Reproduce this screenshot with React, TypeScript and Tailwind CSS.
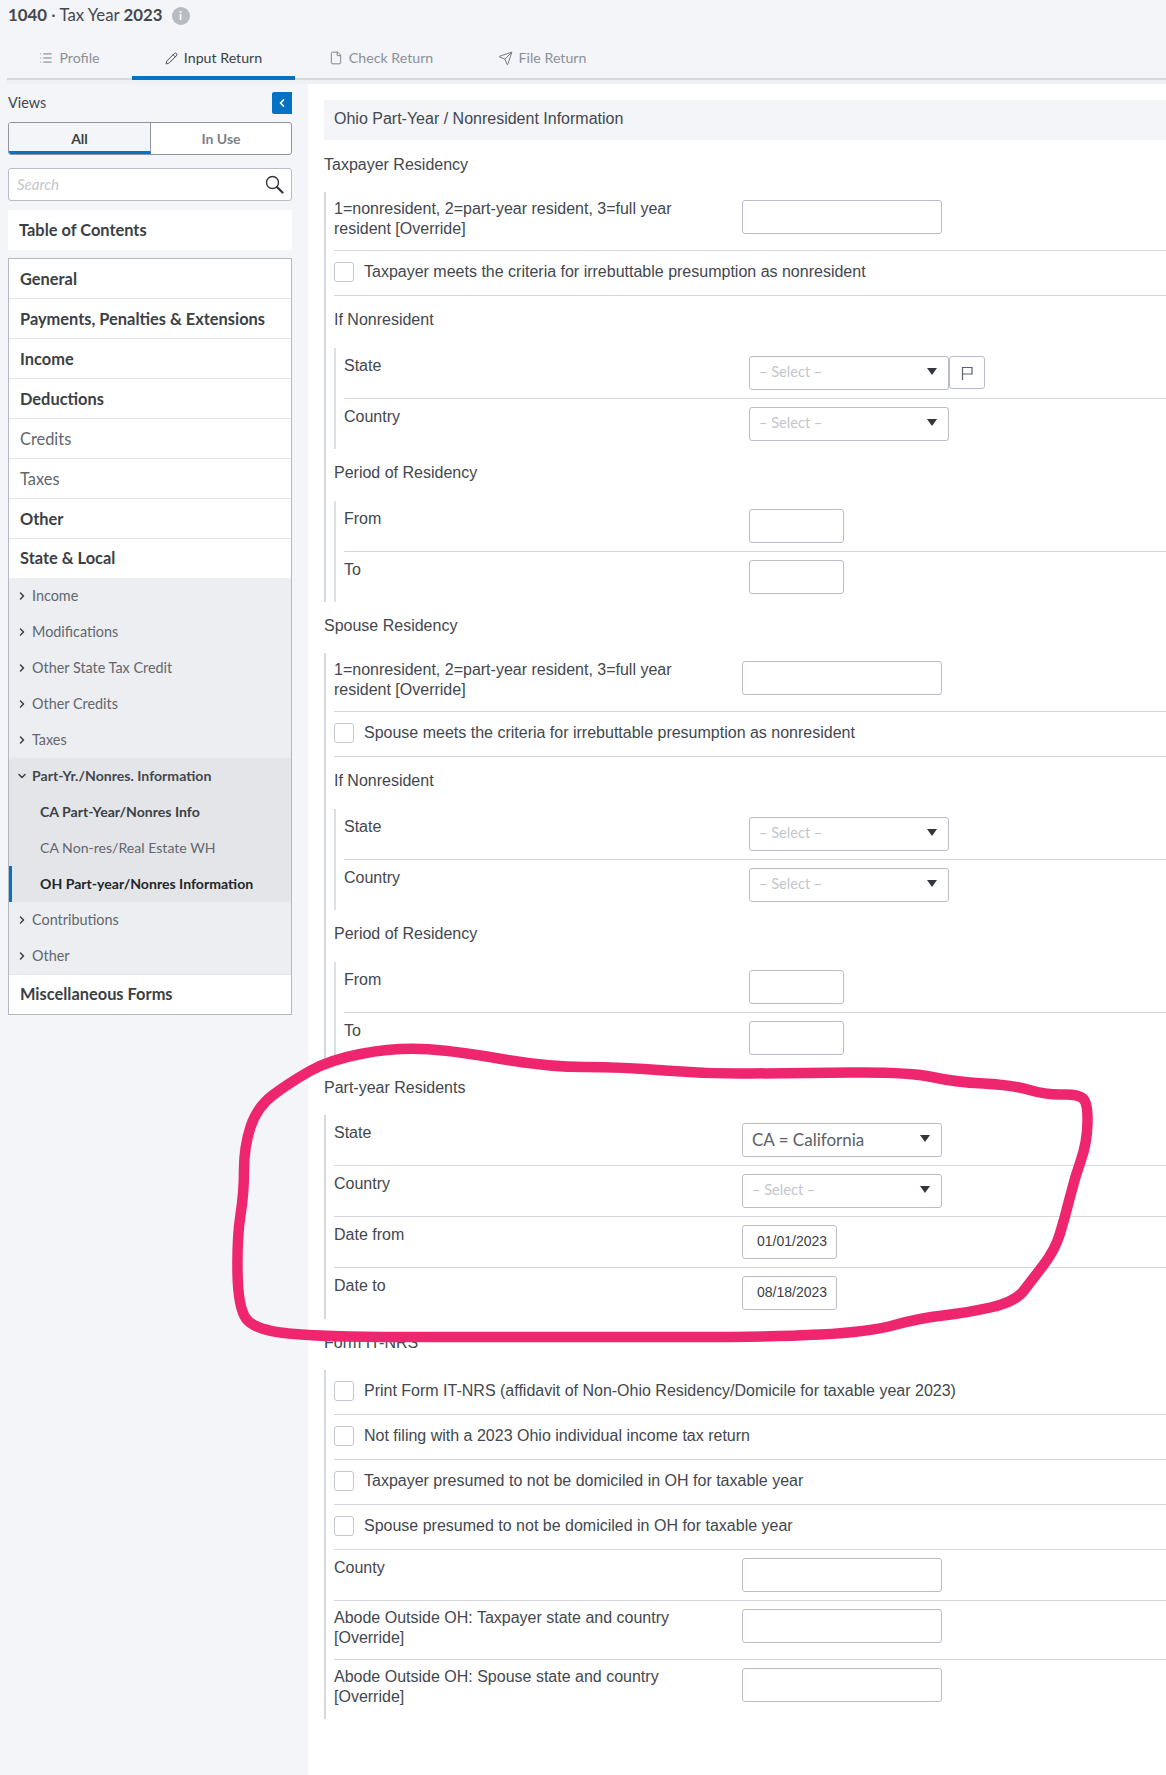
import React from "react";
import { ChevronRight, ChevronDown, ChevronLeft, List, Pencil, File, Send } from "lucide-react";

const LATO = "font-['Lato',sans-serif]";

function Input({ value, date }: { value?: string; date?: boolean }) {
  return (
    <input
      readOnly
      defaultValue={value}
      className={
        (date ? "w-[95px]" : "w-[200px]") +
        " h-[34px] rounded-[3px] border border-[#b9bdc7] bg-white pb-[2px] pl-[14px] text-[14px] text-[#3c4046] outline-none"
      }
    />
  );
}

function Select({ value }: { value?: string }) {
  return (
    <div className={"flex h-[34px] w-[200px] items-center justify-between rounded-[3px] border border-[#b9bdc7] bg-white pl-[9px] pr-[11px] " + LATO}>
      {value ? (
        <span className="pb-[1px] text-[17px] text-[#5b6068]">{value}</span>
      ) : (
        <span className="pb-[2px] text-[14.6px] text-[#c3c6cd]">– Select –</span>
      )}
      <svg width="10" height="8" viewBox="0 0 10 8" className="mb-[2px]">
        <polygon points="0,0 10,0 5,7" fill="#33363b" />
      </svg>
    </div>
  );
}

function FlagBtn() {
  return (
    <div className="flex h-[33px] w-[36px] items-center justify-center rounded-[3px] border border-[#b9bdc7] bg-white">
      <svg width="12" height="14" viewBox="0 0 12 14" fill="none" stroke="#5c6068" strokeWidth="1.2">
        <path d="M1.5 14V1.5H11V8H1.5" />
      </svg>
    </div>
  );
}

function TopRow({ label, children, last, tall }: { label: React.ReactNode; children: React.ReactNode; last?: boolean; tall?: boolean }) {
  return (
    <div className={(last ? "" : "border-b border-[#d5d8de] ") + (tall ? "h-[59px] " : "h-[51px] ") + "flex"}>
      <div className={(tall ? "pt-[7px] " : "pt-[8px] ") + "w-[408px] shrink-0 pr-[40px] leading-[20px]"}>{label}</div>
      <div className="pt-[8px]">{children}</div>
    </div>
  );
}

function NestRow({ label, children, last }: { label: string; children: React.ReactNode; last?: boolean }) {
  return (
    <div className={(last ? "h-[50px] " : "h-[51px] border-b border-[#d5d8de] ") + "flex"}>
      <div className="w-[405px] shrink-0 pt-[8px] leading-[20px]">{label}</div>
      <div className="flex items-start pt-[8px]">{children}</div>
    </div>
  );
}

function CheckRow({ label }: { label: string }) {
  return (
    <div className="flex h-[45px] items-center gap-[10px] border-b border-[#d5d8de] pb-[2px]">
      <div className="h-[20px] w-[20px] rounded-[3px] border border-[#c4c7cf] bg-white" />
      <span className="leading-[20px]">{label}</span>
    </div>
  );
}

function Heading({ children }: { children: string }) {
  return <div className="h-[52px] pt-[15px] leading-[20px]">{children}</div>;
}

function SubHeading({ children }: { children: string }) {
  return <div className="h-[52px] pt-[14px] leading-[20px]">{children}</div>;
}

function Nested({ children }: { children: React.ReactNode }) {
  return <div className="border-l-2 border-[#dcdfe5] pl-2">{children}</div>;
}

function Residency({ who, flag }: { who: string; flag?: boolean }) {
  return (
    <div className="border-l-[2px] border-[#d5d8de] pl-2">
      <TopRow tall label="1=nonresident, 2=part-year resident, 3=full year resident [Override]">
        <Input />
      </TopRow>
      <CheckRow label={`${who} meets the criteria for irrebuttable presumption as nonresident`} />
      <SubHeading>If Nonresident</SubHeading>
      <Nested>
        <NestRow label="State">
          <Select />
          {flag ? <FlagBtn /> : null}
        </NestRow>
        <NestRow label="Country" last>
          <Select />
        </NestRow>
      </Nested>
      <SubHeading>Period of Residency</SubHeading>
      <Nested>
        <NestRow label="From">
          <Input date />
        </NestRow>
        <NestRow label="To" last>
          <Input date />
        </NestRow>
      </Nested>
    </div>
  );
}

function Main({ label, muted }: { label: string; muted?: boolean }) {
  return (
    <div
      className={
        "flex h-[40px] items-center border-b border-[#e2e4e9] bg-white pl-[11px] pt-[1px] text-[16.4px] " +
        (muted ? "font-normal text-[#62676f]" : "font-bold text-[#3b3f46]")
      }
    >
      {label}
    </div>
  );
}

function Sub({ label }: { label: string }) {
  return (
    <div className="flex h-[36px] items-center pb-[1px] text-[14.4px] text-[#62676f]">
      <ChevronRight size={12} strokeWidth={3} className="ml-[7px] mr-[4px] text-[#3b3f46]" />
      {label}
    </div>
  );
}

function Tab({ icon, label, active, className }: { icon: React.ReactNode; label: string; active?: boolean; className: string }) {
  return (
    <div
      className={
        "flex h-[35px] items-center justify-center gap-[6px] border-b-4 pb-[5px] text-[14.2px] " +
        (active ? "border-[#0672c4] text-[#3b3f46]" : "border-transparent text-[#8b9097]") +
        " " +
        className
      }
    >
      <span className={active ? "text-[#3b3f46]" : "text-[#70757c]"}>{icon}</span>
      {label}
    </div>
  );
}

const pts: [number, number][] = [
  [329, 1060], [392, 1048], [450, 1050], [547, 1067], [622, 1067], [708, 1074], [794, 1073], [909, 1072],
  [955, 1082], [1012, 1085], [1047, 1095], [1078, 1094], [1088, 1103], [1087, 1143], [1075, 1177], [1065, 1217],
  [1055, 1250], [1032, 1280], [1015, 1302], [966, 1313], [920, 1318], [869, 1332], [771, 1337], [622, 1337],
  [478, 1337], [323, 1337], [254, 1330], [238, 1307], [237, 1237], [244, 1193], [244, 1147], [257, 1107], [289, 1083],
];

function smooth(p: [number, number][]) {
  const n = p.length;
  const mid = (a: [number, number], b: [number, number]) => `${(a[0] + b[0]) / 2} ${(a[1] + b[1]) / 2}`;
  let d = `M${mid(p[n - 1], p[0])}`;
  for (let i = 0; i < n; i++) d += ` Q${p[i][0]} ${p[i][1]} ${mid(p[i], p[(i + 1) % n])}`;
  return d + "Z";
}

export default function App() {
  return (
    <div className="relative min-h-[1775px] w-[1166px] overflow-hidden bg-[#f3f5f9] font-['Liberation_Sans',Arial,sans-serif] text-[16px] text-[#43474e]">
      <div className={"flex h-[45px] items-start gap-[9px] pl-[8px] pt-[4px] text-[16.8px] leading-[22px] " + LATO}>
        <span className="text-[#43474e]">
          <b className="font-bold">1040</b> · Tax Year <b className="font-bold">2023</b>
        </span>
        <span className="mt-[3px] flex h-[18px] w-[18px] items-center justify-center rounded-full bg-[#b7bbc2] text-[12px] font-bold text-white">i</span>
      </div>

      <div className={"ml-[7px] flex h-[35px] border-b-2 border-[#d6d8de] " + LATO}>
        <Tab className="w-[125px]" label="Profile" icon={<List size={14} strokeWidth={1.6} />} />
        <Tab active className="w-[163px]" label="Input Return" icon={<Pencil size={13} strokeWidth={1.7} />} />
        <Tab className="w-[172px]" label="Check Return" icon={<File size={14} strokeWidth={1.5} />} />
        <Tab className="w-[150px]" label="File Return" icon={<Send size={15} strokeWidth={1.5} />} />
      </div>
      <div className="ml-[7px] h-[4px] bg-[#eef0f4]" />

      <div className="flex">
        <aside className={"w-[308px] shrink-0 pl-[8px] pr-[16px] pt-[8px] " + LATO}>
          <div className="flex h-[22px] items-center justify-between text-[14.4px] text-[#43474e]">
            <span>Views</span>
            <div className="flex h-[22px] w-[20px] items-center justify-center rounded-l-[2px] bg-[#0672c4]">
              <ChevronLeft size={12} strokeWidth={3.5} className="text-white" />
            </div>
          </div>
          <div className="mt-[8px] flex h-[33px] overflow-hidden rounded-[3px] border border-[#8f949e] bg-white text-[14px]">
            <div className="flex w-[142px] items-center justify-center border-b-[3px] border-r border-b-[#0672c4] border-r-[#8f949e] bg-[#f3f5f9] pt-[2px] font-bold text-[#3b3f46]">All</div>
            <div className="flex flex-1 items-center justify-center font-bold text-[#7c8188]">In Use</div>
          </div>
          <div className="mt-[13px] flex h-[33px] items-center justify-between rounded-[3px] border border-[#b9bdc7] bg-white pl-[8px] pr-[7px]">
            <span className="text-[15px] italic text-[#c3c6cd]">Search</span>
            <svg width="19" height="19" viewBox="0 0 19 19" fill="none" stroke="#33363b">
              <circle cx="7.5" cy="7.5" r="6" strokeWidth="1.4" />
              <path d="M12 12l5.5 5.5" strokeWidth="2.2" strokeLinecap="round" />
            </svg>
          </div>
          <div className="mt-[9px] flex h-[40px] items-center bg-white pl-[11px] pt-[1px] text-[16.4px] font-bold text-[#3b3f46]">Table of Contents</div>
          <div className="mt-[8px] border border-[#b4b8c2]">
            <Main label="General" />
            <Main label="Payments, Penalties & Extensions" />
            <Main label="Income" />
            <Main label="Deductions" />
            <Main label="Credits" muted />
            <Main label="Taxes" muted />
            <Main label="Other" />
            <div className="flex h-[39px] items-center bg-white pl-[11px] text-[16.4px] font-bold text-[#3b3f46]">State & Local</div>
            <div className="bg-[#eceef1]">
              <Sub label="Income" />
              <Sub label="Modifications" />
              <Sub label="Other State Tax Credit" />
              <Sub label="Other Credits" />
              <Sub label="Taxes" />
              <div className="bg-[#e4e5e9]">
                <div className="flex h-[36px] items-center pb-[1px] text-[14.1px] font-bold text-[#43474e]">
                  <ChevronDown size={12} strokeWidth={3} className="ml-[7px] mr-[4px] text-[#3b3f46]" />
                  Part-Yr./Nonres. Information
                </div>
                <div className="flex h-[36px] items-center pb-[1px] pl-[31px] text-[14.1px] font-bold text-[#3b3f46]">CA Part-Year/Nonres Info</div>
                <div className="flex h-[36px] items-center pb-[1px] pl-[31px] text-[14.1px] text-[#62676f]">CA Non-res/Real Estate WH</div>
                <div className="flex h-[36px] items-center border-l-[3px] border-[#0672c4] pb-[1px] pl-[28px] text-[14.1px] font-bold text-[#22252a]">OH Part-year/Nonres Information</div>
              </div>
              <Sub label="Contributions" />
              <Sub label="Other" />
            </div>
            <div className="flex h-[40px] items-center border-t border-[#e2e4e9] bg-white pl-[11px] text-[16.4px] font-bold text-[#3b3f46]">Miscellaneous Forms</div>
          </div>
        </aside>

        <main className="min-h-[1691px] flex-1 bg-white pl-[16px] pt-[16px]">
          <div className="flex h-[40px] items-center bg-[#f3f5f9] pb-[2px] pl-[10px] text-[16px]">Ohio Part-Year / Nonresident Information</div>

          <Heading>Taxpayer Residency</Heading>
          <Residency who="Taxpayer" flag />

          <div className="h-[51px] pt-[14px] leading-[20px]">Spouse Residency</div>
          <Residency who="Spouse" />

          <Heading>Part-year Residents</Heading>
          <div className="border-l-[2px] border-[#d5d8de] pl-2">
            <TopRow label="State"><Select value="CA = California" /></TopRow>
            <TopRow label="Country"><Select /></TopRow>
            <TopRow label="Date from"><Input date value="01/01/2023" /></TopRow>
            <TopRow label="Date to" last><Input date value="08/18/2023" /></TopRow>
          </div>

          <div className="h-[51px] pt-[14px] leading-[20px]">Form IT-NRS</div>
          <div className="border-l-[2px] border-[#d5d8de] pl-2">
            <CheckRow label="Print Form IT-NRS (affidavit of Non-Ohio Residency/Domicile for taxable year 2023)" />
            <CheckRow label="Not filing with a 2023 Ohio individual income tax return" />
            <CheckRow label="Taxpayer presumed to not be domiciled in OH for taxable year" />
            <CheckRow label="Spouse presumed to not be domiciled in OH for taxable year" />
            <TopRow label="County"><Input /></TopRow>
            <TopRow tall label="Abode Outside OH: Taxpayer state and country [Override]"><Input /></TopRow>
            <TopRow tall last label="Abode Outside OH: Spouse state and country [Override]"><Input /></TopRow>
          </div>
        </main>
      </div>

      <svg className="pointer-events-none absolute left-0 top-0" width="1166" height="1775" fill="none">
        <path d={smooth(pts)} stroke="#ee2670" strokeWidth="10.5" strokeLinejoin="round" />
      </svg>
    </div>
  );
}
